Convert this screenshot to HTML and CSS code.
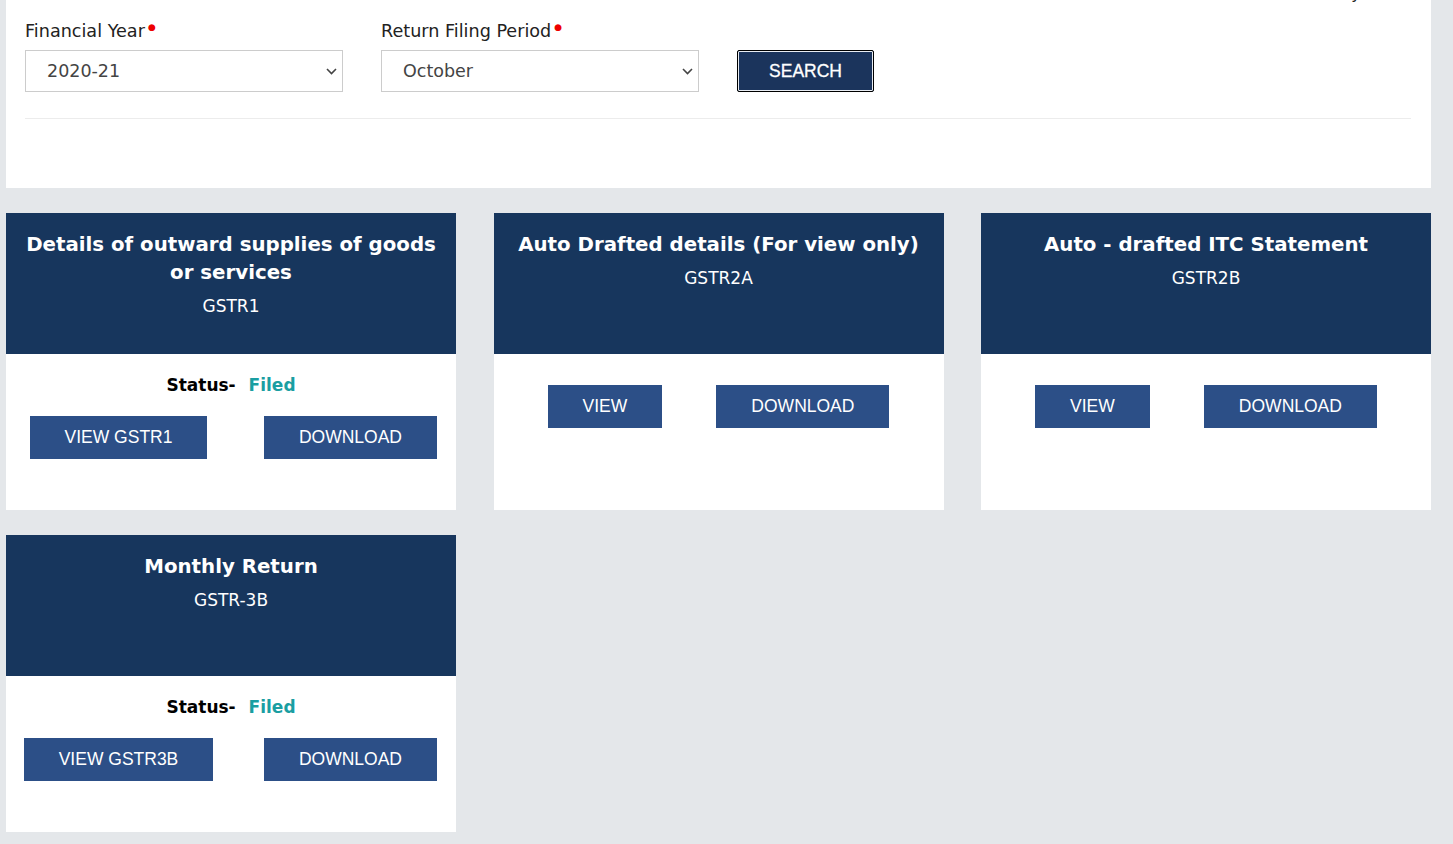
FILE: index.html
```html
<!DOCTYPE html>
<html lang="en">
<head>
<meta charset="utf-8">
<title>Returns Dashboard</title>
<link rel="stylesheet" href="styles.css">
</head>
<body>
<div class="page">
  <section class="panel">
    <div class="mandatory"><span class="req-dot">&#8226;</span> indicates Mandatory Fields</div>
    <div class="form-row">
      <div class="field">
        <label class="field-label">Financial Year<span class="req">&#9679;</span></label>
        <div class="select-wrap">
          <select class="select"><option>2020-21</option></select>
          <svg class="chev" width="11" height="7" viewBox="0 0 11 7"><path d="M1 1 L5.5 5.5 L10 1" fill="none" stroke="#444" stroke-width="1.6"/></svg>
        </div>
      </div>
      <div class="field">
        <label class="field-label">Return Filing Period<span class="req">&#9679;</span></label>
        <div class="select-wrap">
          <select class="select"><option>October</option></select>
          <svg class="chev" width="11" height="7" viewBox="0 0 11 7"><path d="M1 1 L5.5 5.5 L10 1" fill="none" stroke="#444" stroke-width="1.6"/></svg>
        </div>
      </div>
      <button class="search-btn">SEARCH</button>
    </div>
    <div class="divider"></div>
  </section>

  <div class="cards">
    <div class="card">
      <div class="card-head">
        <div class="card-title">Details of outward supplies of goods or services</div>
        <div class="card-sub">GSTR1</div>
      </div>
      <div class="card-body">
        <div class="status">Status- <span class="filed">Filed</span></div>
        <div class="btn-row split">
          <div class="half"><button class="btn">VIEW GSTR1</button></div>
          <div class="half right"><button class="btn">DOWNLOAD</button></div>
        </div>
      </div>
    </div>

    <div class="card">
      <div class="card-head">
        <div class="card-title">Auto Drafted details (For view only)</div>
        <div class="card-sub">GSTR2A</div>
      </div>
      <div class="card-body plain">
        <div class="btn-row even">
          <button class="btn">VIEW</button>
          <button class="btn">DOWNLOAD</button>
        </div>
      </div>
    </div>

    <div class="card">
      <div class="card-head">
        <div class="card-title">Auto - drafted ITC Statement</div>
        <div class="card-sub">GSTR2B</div>
      </div>
      <div class="card-body plain">
        <div class="btn-row even">
          <button class="btn">VIEW</button>
          <button class="btn">DOWNLOAD</button>
        </div>
      </div>
    </div>

    <div class="card">
      <div class="card-head">
        <div class="card-title">Monthly Return</div>
        <div class="card-sub">GSTR-3B</div>
      </div>
      <div class="card-body">
        <div class="status">Status- <span class="filed">Filed</span></div>
        <div class="btn-row split">
          <div class="half"><button class="btn">VIEW GSTR3B</button></div>
          <div class="half right"><button class="btn">DOWNLOAD</button></div>
        </div>
      </div>
    </div>
  </div>
</div>
</body>
</html>
```

FILE: styles.css
```css
* { box-sizing: border-box; }

html, body {
  margin: 0;
  padding: 0;
  background: #e4e7ea;
  overflow: hidden;
}

body {
  font-family: "DejaVu Sans", Verdana, sans-serif;
  color: #222;
}

.page {
  padding: 0 22px 0 6px;
}

.panel {
  display: flow-root;
  background: #fff;
  height: 188px;
  padding: 0 20px 0 19px;
}

.mandatory {
  text-align: right;
  font-size: 16px;
  line-height: 18px;
  margin-top: -15px;
  height: 18px;
  color: #222;
}

.req-dot { color: #e00; }

.form-row {
  display: flex;
  align-items: flex-end;
  gap: 38px;
  margin-top: 18px;
}

.field {
  width: 318px;
}

.field-label {
  display: block;
  font-size: 17.6px;
  line-height: 20px;
  height: 20px;
  color: #222;
  margin-bottom: 9px;
}

.req {
  position: relative;
  top: -7px;
  color: #e00;
  font-size: 9px;
  margin-left: 3px;
}

.select-wrap {
  position: relative;
  height: 42px;
}

.select {
  appearance: none;
  -webkit-appearance: none;
  width: 100%;
  height: 42px;
  border: 1px solid #ccc;
  border-radius: 0;
  background: #fff;
  font-family: "DejaVu Sans", Verdana, sans-serif;
  font-size: 17.5px;
  color: #444;
  padding: 0 30px 0 21px;
  outline: none;
}

.chev {
  position: absolute;
  right: 6px;
  top: 18px;
  pointer-events: none;
}

.search-btn {
  width: 137px;
  height: 42px;
  background: #1b345c;
  border: 1px solid #000;
  box-shadow: inset 0 0 0 1px #e8ecf2;
  border-radius: 2px;
  color: #fff;
  font-family: "Liberation Sans", Arial, sans-serif;
  font-size: 17.5px;
  padding: 0;
  -webkit-text-stroke: 0.3px #fff;
}

.divider {
  height: 1px;
  background: #ececec;
  margin-top: 26px;
}

.cards {
  display: grid;
  grid-template-columns: repeat(3, 1fr);
  column-gap: 37.5px;
  row-gap: 25px;
  margin-top: 25px;
}

.card {
  background: #fff;
}

.card-head {
  background: #17365d;
  height: 141px;
  padding: 18px 10px 0;
  text-align: center;
  color: #fff;
}

.card-title {
  font-weight: bold;
  font-size: 19.8px;
  line-height: 28px;
}

.card-sub {
  font-size: 17px;
  line-height: 22px;
  margin-top: 8px;
}

.card-body {
  height: 156px;
  padding-top: 20px;
}

.card-body.plain {
  padding-top: 31px;
}

.status {
  text-align: center;
  font-weight: bold;
  font-size: 17px;
  line-height: 22px;
  color: #000;
  margin-bottom: 20px;
}

.filed {
  color: #1a9ea2;
  margin-left: 7px;
}

.btn-row {
  display: flex;
}

.btn-row.even {
  justify-content: space-evenly;
}

.btn-row.split .half {
  width: 50%;
  display: flex;
  justify-content: center;
}

.btn-row.split .half.right {
  justify-content: flex-end;
  padding-right: 19px;
}

.btn {
  height: 43px;
  padding: 0 35px;
  background: #2c4f87;
  border: none;
  border-radius: 0;
  color: #fff;
  font-family: "Liberation Sans", Arial, sans-serif;
  font-size: 17.5px;
  white-space: nowrap;
}
```
